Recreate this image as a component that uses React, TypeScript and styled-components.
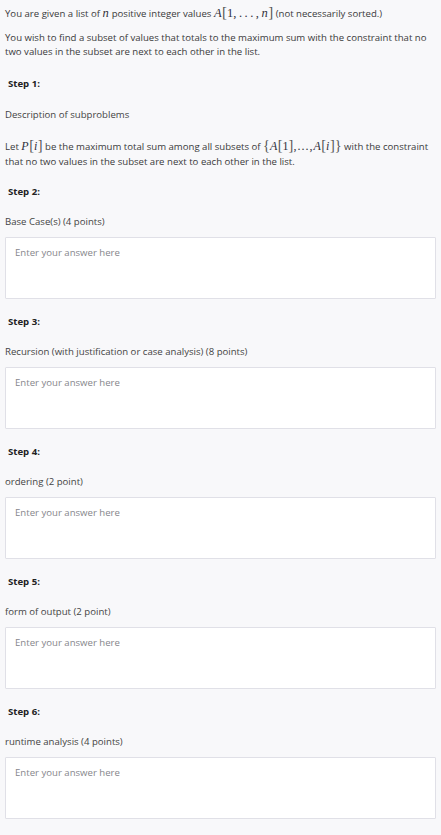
import { createGlobalStyle, styled } from 'styled-components';

const GlobalStyle = createGlobalStyle`
  html, body {
    margin: 0;
    padding: 0;
    background: #f8f8fa;
  }
  body {
    font-family: "Open Sans", Lato, sans-serif;
    color: #333;
  }
`;

const Page = styled.div`
  padding: 7px 5px 18px 5px;
  font-size: 9.6px;
`;

const Para = styled.p<{ $gap?: number; $lh?: number }>`
  margin: ${(p) => p.$gap ?? 0}px 0 0 0;
  line-height: ${(p) => p.$lh ?? 14}px;
  color: #3a3a3a;
`;

const Math = styled.span<{ $size?: number }>`
  font-family: "Liberation Serif", "DejaVu Serif", serif;
  font-size: ${(p) => p.$size ?? 12.5}px;
  color: #2f2f3a;
  line-height: 0;
`;

const Var = styled.i`
  font-style: italic;
  padding-right: 0.5px;
`;

const Bracket = styled.span`
  font-size: 1.2em;
  color: #555;
`;

const StepTitle = styled.div`
  margin: 16px 0 0 3px;
  line-height: 14px;
  font-weight: 700;
  color: #222;
`;

const Label = styled.div`
  margin-top: 16px;
  line-height: 14px;
  color: #444;
`;

const Answer = styled.textarea`
  display: block;
  box-sizing: border-box;
  width: 100%;
  height: 62px;
  margin-top: 8px;
  padding: 8px 9px;
  border: 1px solid #e0e0e7;
  border-radius: 1px;
  background: #fff;
  resize: none;
  font-family: "Open Sans", Lato, sans-serif;
  font-size: 9.6px;
  line-height: 14px;
  color: #333;
  outline: none;
  &::placeholder {
    color: #86868c;
  }
`;

const steps = [
  { n: 2, label: 'Base Case(s) (4 points)' },
  { n: 3, label: 'Recursion (with justification or case analysis) (8 points)' },
  { n: 4, label: 'ordering (2 point)' },
  { n: 5, label: 'form of output (2 point)' },
  { n: 6, label: 'runtime analysis (4 points)' },
];

const dots = ',\u2009.\u2009.\u2009.\u2009,\u2009';
const tightDots = ',\u200a.\u200a.\u200a.\u200a,\u200a';

function App() {
  return (
    <Page>
      <GlobalStyle />
      <Para>
        You are given a list of <Math><Var>n</Var></Math> positive integer values{' '}
        <Math>
          <Var>A</Var>
          <Bracket>[</Bracket>1{dots}<Var>n</Var>
          <Bracket>]</Bracket>
        </Math>{' '}
        (not necessarily sorted.)
      </Para>
      <Para $gap={10}>
        You wish to find a subset of values that totals to the maximum sum with the constraint that no
        two values in the subset are next to each other in the list.
      </Para>
      <StepTitle style={{ marginTop: 18 }}>Step 1:</StepTitle>
      <Label style={{ marginTop: 17 }}>Description of subproblems</Label>
      <Para $gap={17} $lh={15}>
        Let{' '}
        <Math $size={12}>
          <Var>P</Var>
          <Bracket>[</Bracket>
          <Var>i</Var>
          <Bracket>]</Bracket>
        </Math>{' '}
        be the maximum total sum among all subsets of{' '}
        <Math $size={12}>
          <Bracket>{'{'}</Bracket>
          <Var>A</Var>
          <Bracket>[</Bracket>1<Bracket>]</Bracket>
          {tightDots}
          <Var>A</Var>
          <Bracket>[</Bracket>
          <Var>i</Var>
          <Bracket>]</Bracket>
          <Bracket>{'}'}</Bracket>
        </Math>{' '}
        with the constraint that no two values in the subset are next to each other in the list.
      </Para>
      {steps.map((s) => (
        <div key={s.n}>
          <StepTitle>Step {s.n}:</StepTitle>
          <Label>{s.label}</Label>
          <Answer placeholder="Enter your answer here" />
        </div>
      ))}
    </Page>
  );
}

export default App;
